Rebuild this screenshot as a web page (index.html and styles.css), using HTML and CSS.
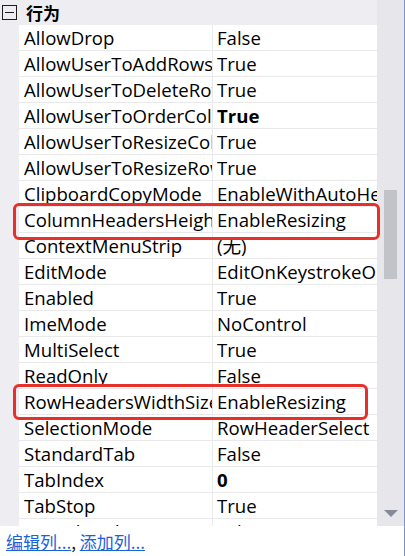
FILE: index.html
```html
<!DOCTYPE html>
<html>
<head>
<meta charset="utf-8">
<link rel="stylesheet" href="styles.css">
</head>
<body>
<div class="panel">
  <div class="grid-area">
    <div class="list">
      <div class="cat">
        <span class="expander"><span class="minus"></span></span>
        <span class="cat-title">行为</span>
      </div>
      <div class="row"><div class="name">AllowDrop</div><div class="val">False</div></div>
      <div class="row"><div class="name">AllowUserToAddRows</div><div class="val">True</div></div>
      <div class="row"><div class="name">AllowUserToDeleteRows</div><div class="val">True</div></div>
      <div class="row"><div class="name">AllowUserToOrderColumns</div><div class="val bold">True</div></div>
      <div class="row"><div class="name">AllowUserToResizeColumns</div><div class="val">True</div></div>
      <div class="row"><div class="name">AllowUserToResizeRows</div><div class="val">True</div></div>
      <div class="row"><div class="name">ClipboardCopyMode</div><div class="val">EnableWithAutoHeaderText</div></div>
      <div class="row"><div class="name">ColumnHeadersHeightSizeMode</div><div class="val">EnableResizing</div></div>
      <div class="row"><div class="name">ContextMenuStrip</div><div class="val">(无)</div></div>
      <div class="row"><div class="name">EditMode</div><div class="val">EditOnKeystrokeOrF2</div></div>
      <div class="row"><div class="name">Enabled</div><div class="val">True</div></div>
      <div class="row"><div class="name">ImeMode</div><div class="val">NoControl</div></div>
      <div class="row"><div class="name">MultiSelect</div><div class="val">True</div></div>
      <div class="row"><div class="name">ReadOnly</div><div class="val">False</div></div>
      <div class="row"><div class="name">RowHeadersWidthSizeMode</div><div class="val">EnableResizing</div></div>
      <div class="row"><div class="name">SelectionMode</div><div class="val">RowHeaderSelect</div></div>
      <div class="row"><div class="name">StandardTab</div><div class="val">False</div></div>
      <div class="row"><div class="name">TabIndex</div><div class="val bold">0</div></div>
      <div class="row"><div class="name">TabStop</div><div class="val">True</div></div>
      <div class="row"><div class="name">VirtualMode</div><div class="val">False</div></div>
    </div>
    <div class="scrollbar">
      <div class="thumb"></div>
      <div class="arrow-down"></div>
    </div>
  </div>
  <div class="footer">
    <a class="link" href="#">编辑列...</a><span class="sep">, </span><a class="link" href="#">添加列...</a>
  </div>
  <div class="mark mark-1"></div>
  <div class="mark mark-2"></div>
</div>
</body>
</html>
```

FILE: styles.css
```css
html, body {
  margin: 0;
  padding: 0;
  background: #ffffff;
}

.panel {
  position: relative;
  width: 405px;
  height: 556px;
  overflow: hidden;
  font-family: "Open Sans", "Noto Sans CJK SC", sans-serif;
  font-size: 18.6px;
  color: #000000;
  border-right: 1px solid #7f93c8;
  box-sizing: border-box;
}

.grid-area {
  display: flex;
  height: 526px;
  background: #eeeef2;
  overflow: hidden;
}

.list {
  width: 377px;
  display: flex;
  flex-direction: column;
}

.cat {
  height: 25px;
  display: flex;
  align-items: center;
  flex-shrink: 0;
}

.expander {
  width: 13px;
  height: 13px;
  margin-left: 2px;
  border: 1px solid #1e1e1e;
  display: flex;
  align-items: center;
  justify-content: center;
  box-sizing: content-box;
}

.minus {
  width: 9px;
  height: 1px;
  background: #1e1e1e;
}

.cat-title {
  margin-left: 9px;
  font-family: "Noto Sans CJK SC", sans-serif;
  font-weight: bold;
  font-size: 17px;
  line-height: 25px;
}

.row {
  flex-shrink: 0;
  margin-left: 19px;
  height: 26px;
  display: grid;
  grid-template-columns: 194px 164px;
  background: #ffffff;
  border-bottom: 1px solid #e9e9ec;
  box-sizing: border-box;
}

.name, .val {
  white-space: nowrap;
  overflow: hidden;
  line-height: 25px;
}

.name {
  padding-left: 5px;
  border-right: 1px solid #e9e9ec;
}

.val {
  padding-left: 4px;
}

.bold {
  font-weight: bold;
}

.scrollbar {
  width: 27px;
  background: #e6e6eb;
  display: flex;
  flex-direction: column;
}

.thumb {
  margin-top: 190px;
  margin-left: 7px;
  width: 13px;
  height: 89px;
  background: #c2c3c9;
}

.arrow-down {
  margin-top: auto;
  margin-bottom: 9px;
  margin-left: 7px;
  width: 0;
  height: 0;
  border-left: 7px solid transparent;
  border-right: 7px solid transparent;
  border-top: 7px solid #868999;
}

.footer {
  height: 30px;
  background: #ffffff;
  padding-left: 6px;
  display: flex;
  align-items: center;
  font-family: "Noto Sans CJK SC", sans-serif;
  font-size: 17px;
}

.link {
  color: #1b62d6;
  text-decoration: underline;
}

.sep {
  color: #222222;
  white-space: pre;
}

.mark {
  position: absolute;
  left: 13px;
  border: 3px solid #e8302a;
  border-radius: 6px;
  box-sizing: border-box;
}

.mark-1 {
  top: 203px;
  width: 367px;
  height: 37px;
}

.mark-2 {
  top: 384px;
  width: 355px;
  height: 36px;
}
```
